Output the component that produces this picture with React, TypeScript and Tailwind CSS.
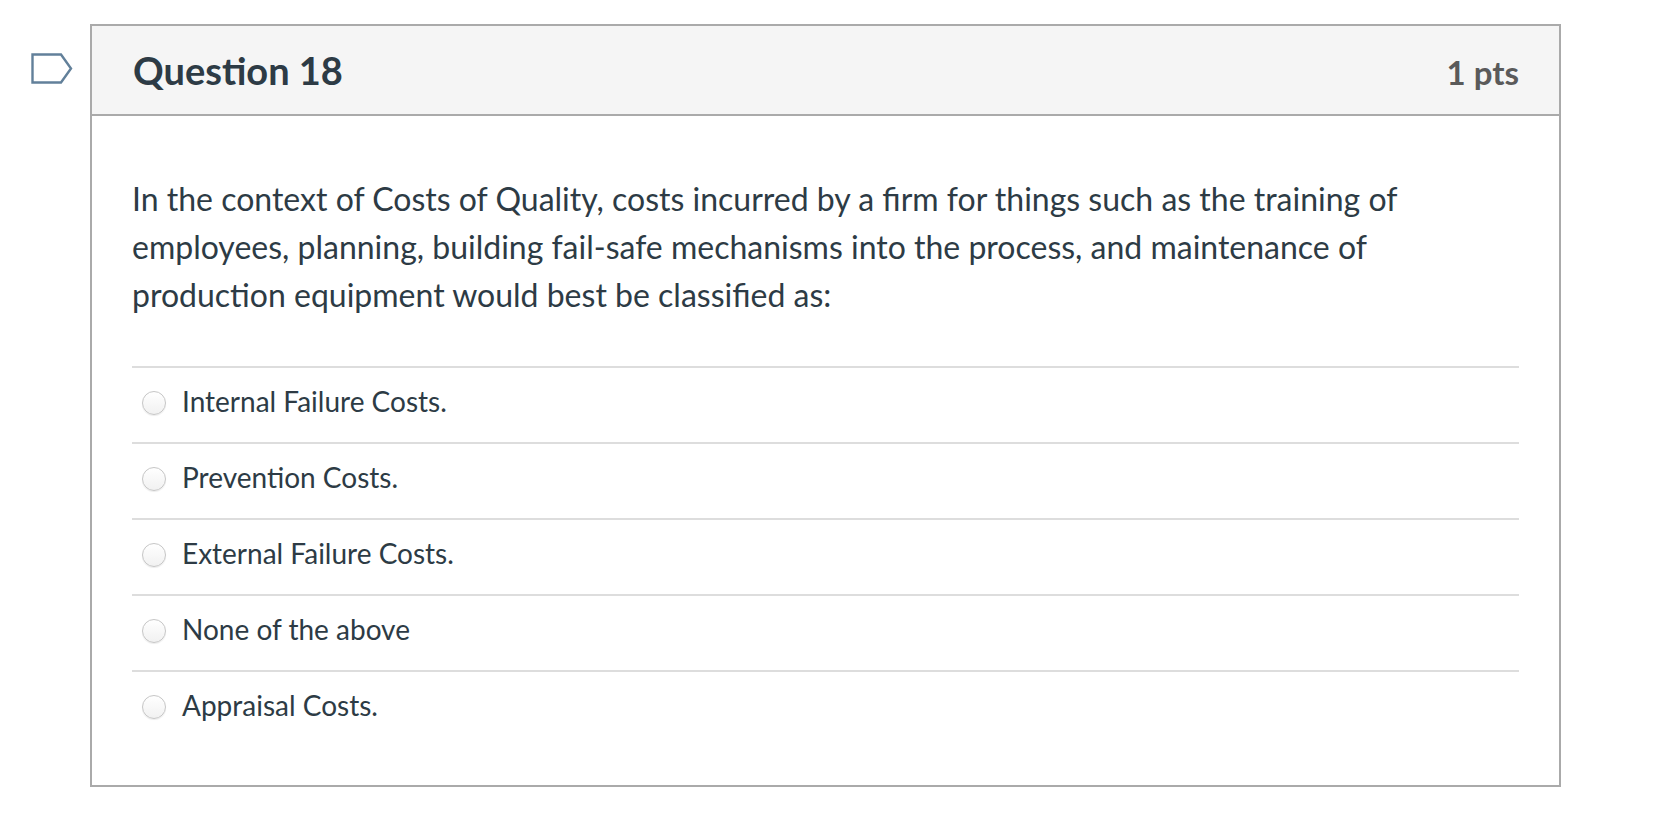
import React from "react";

const answers = [
  "Internal Failure Costs.",
  "Prevention Costs.",
  "External Failure Costs.",
  "None of the above",
  "Appraisal Costs.",
];

function FlagIcon() {
  return (
    <svg width="44" height="32" viewBox="0 0 44 32" className="block">
      <path
        d="M1.5 1.5 H30 L40 15.5 L30 29.5 H1.5 Z"
        fill="none"
        stroke="#62809a"
        strokeWidth="2.4"
        strokeLinejoin="miter"
      />
    </svg>
  );
}

function Radio() {
  return (
    <span className="block w-[24px] h-[24px] rounded-full border border-[#c6c6c6] bg-gradient-to-b from-[#ffffff] to-[#f1f1f1] shadow-[0_1px_1px_rgba(0,0,0,0.08)] shrink-0" />
  );
}

export default function App() {
  return (
    <div
      className="w-[1668px] h-[838px] bg-white flex items-start pl-[31px] pt-[24px]"
      style={{ fontFamily: "Lato, 'Open Sans', sans-serif" }}
    >
      <div className="mt-[29px] w-[59px] shrink-0">
        <FlagIcon />
      </div>
      <div className="w-[1471px] h-[763px] border-2 border-[#aaaaaa] box-border flex flex-col">
        <div className="h-[90px] bg-[#f5f5f5] border-b-2 border-[#aaaaaa] flex items-center justify-between pl-[41px] pr-[40px]">
          <span className="text-[38px] font-bold text-[#2d3b45] leading-none">Question 18</span>
          <span className="text-[33px] font-bold text-[#5a5a5a] leading-none mt-[4px]">1 pts</span>
        </div>
        <div className="px-[40px] pt-[59px] pb-[39px]">
          <p className="text-[32px] leading-[48px] text-[#2d3b45]">
            In the context of Costs of Quality, costs incurred by a firm for things such as the training of employees, planning, building fail-safe mechanisms into the process, and maintenance of production equipment would best be classified as:
          </p>
          <div className="mt-[47px]">
            {answers.map((a) => (
              <div
                key={a}
                className="border-t-2 border-[#dddddd] h-[76px] flex items-center pb-[8px]"
              >
                <div className="ml-[10px] mt-[4px]">
                  <Radio />
                </div>
                <span className="ml-[16px] text-[28px] leading-[42px] text-[#2d3b45]">{a}</span>
              </div>
            ))}
          </div>
        </div>
      </div>
    </div>
  );
}
